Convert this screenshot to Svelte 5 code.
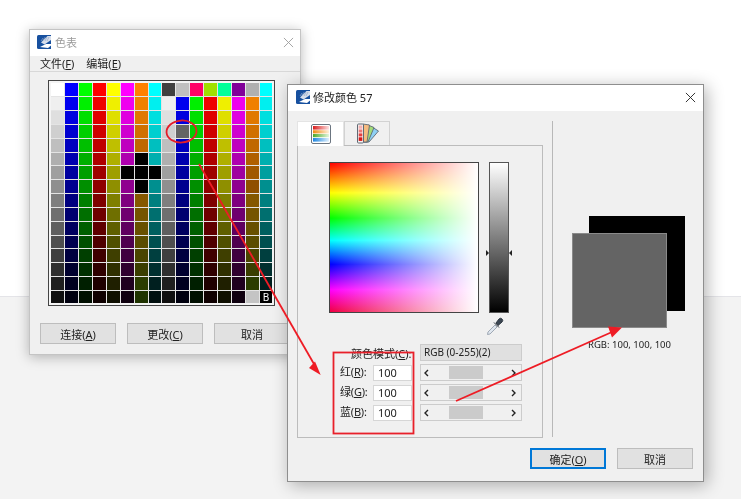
<script>
  const hexv = (n) => Math.max(0, Math.round(n)).toString(16).padStart(2, '0');
  const scale = (base, r) => {
    const v = (255 - 16 * r) / 255;
    return '#' + base.map((c) => hexv(c * v)).join('');
  };
  const orange = ['#ff8000','#f08000','#e07800','#d07000','#c06800','#b06000','#a05800','#905000','#855800','#755400','#685000','#5a4c00','#4a4500','#3a3e00','#2b3c00','#1f3300'];
  const gray = [255,255,255], blue=[0,0,255], green=[0,255,0], red=[255,0,0], yellow=[255,255,0], magenta=[255,0,255], cyan=[0,255,255];
  const top = ['#ffffff','#0000ff','#00ff00','#ff0000','#ffff00','#ff00ff','#ff8000','#00ffff','#404040','#c0c0c0','#ff0066','#a0e000','#00ff99','#800099','#b0b0b0','#00ffff'];
  const columns = [gray,blue,green,red,yellow,magenta,'o',cyan,gray,blue,green,red,yellow,magenta,'o',cyan];
  const black = new Set(['5-6','6-5','6-6','6-7','7-6']);
  const cells = [];
  for (let r = 0; r < 16; r++) for (let c = 0; c < 16; c++) {
    let col;
    if (r === 0) col = top[c];
    else if (columns[c] === 'o') col = orange[r];
    else col = scale(columns[c], r);
    if (black.has(r + '-' + c)) col = '#000000';
    if (r === 3 && c === 9) col = '#646464';
    if (r === 15 && c === 14) col = '#c4c4c4';
    if (r === 15 && c === 15) col = '#000000';
    cells.push({ id: r + '-' + c, col, b: r === 15 && c === 15 });
  }
  const rows = [
    { zh: '红', k: 'R' },
    { zh: '绿', k: 'G' },
    { zh: '蓝', k: 'B' },
  ];
</script>

{#snippet logo()}
  <svg class="logo" viewBox="0 0 16 16" aria-hidden="true">
    <path d="M1 2.5 Q1 1 2.5 1 H15 V15 H2.5 Q1 15 1 13.5 Z" fill="#17509f"/>
    <path d="M5 8.5 L11.5 2 H15 V6 L8.5 10.5 Z" fill="#d7deea"/>
    <path d="M7 4 L5 7 M9 3.2 L7 6.5 M11 3 L9 7 M13 3 L11 7" stroke="#8fa5c8" stroke-width=".7" fill="none"/>
    <path d="M4 13 L10 10 H15 V11.5 L12 14 Z" fill="#ffffff"/>
  </svg>
{/snippet}

{#snippet close()}
  <svg class="close" viewBox="0 0 12 12" aria-hidden="true">
    <path d="M1 1 L11 11 M11 1 L1 11" fill="none" stroke="currentColor" stroke-width="1"/>
  </svg>
{/snippet}

<div class="desk">
  <div class="floor"></div>

  <section class="win palette">
    <header class="title">
      {@render logo()}
      <span class="muted">色表</span>
      {@render close()}
    </header>
    <nav class="menu">
      <span>文件(<u>F</u>)</span>
      <span>编辑(<u>E</u>)</span>
    </nav>
    <div class="grid-frame">
      <div class="grid">
        {#each cells as c (c.id)}
          <div class="cell" style:background={c.col}>{#if c.b}B{/if}</div>
        {/each}
      </div>
    </div>
    <div class="left-btns">
      <button class="btn">连接(<u>A</u>)</button>
      <button class="btn">更改(<u>C</u>)</button>
      <button class="btn">取消</button>
    </div>
  </section>

  <section class="win dialog">
    <header class="title dlg-title">
      {@render logo()}
      <span>修改颜色 57</span>
      {@render close()}
    </header>
    <div class="dlg-body">
      <div class="left-col">
        <div class="tabs">
          <div class="tab active">
            <svg width="20" height="20" viewBox="0 0 20 20" aria-hidden="true">
              <defs>
                <linearGradient id="g1"><stop offset="0" stop-color="#d81e1e"/><stop offset="1" stop-color="#fde0e0"/></linearGradient>
                <linearGradient id="g2"><stop offset="0" stop-color="#f08a10"/><stop offset="1" stop-color="#fdf0d8"/></linearGradient>
                <linearGradient id="g3"><stop offset="0" stop-color="#4aa82a"/><stop offset="1" stop-color="#e4f6dc"/></linearGradient>
                <linearGradient id="g4"><stop offset="0" stop-color="#1a84e0"/><stop offset="1" stop-color="#dff0fd"/></linearGradient>
              </defs>
              <rect x=".5" y=".5" width="19" height="19" rx="1.5" fill="#fff" stroke="#6b7580"/>
              <rect x="2" y="2" width="16" height="3.6" fill="url(#g1)"/>
              <rect x="2" y="6.2" width="16" height="3.2" fill="url(#g2)"/>
              <rect x="2" y="10" width="16" height="3.2" fill="url(#g3)"/>
              <rect x="2" y="14" width="16" height="3.6" fill="url(#g4)"/>
            </svg>
          </div>
          <div class="tab">
            <svg width="23" height="21" viewBox="0 0 23 21" aria-hidden="true">
              <path d="M8 19 L16 4 L22.5 8 L13 19 Z" fill="#8fd0f4" stroke="#5f6a74" stroke-width=".9"/>
              <path d="M7 19 L12 2 L18 4.5 L12 19 Z" fill="#a4dc78" stroke="#5f6a74" stroke-width=".9"/>
              <path d="M6 19 L7 1 L13.5 2 L11 19 Z" fill="#f6bb80" stroke="#5f6a74" stroke-width=".9"/>
              <rect x="1.5" y="1" width="6" height="19" rx="1" fill="#f4f0f0" stroke="#5f6a74" stroke-width="1"/>
              <rect x="2.7" y="2.5" width="3.6" height="3.2" fill="#f6b0b0"/>
              <rect x="2.7" y="6.5" width="3.6" height="3" fill="#ee7878"/>
              <rect x="2.7" y="10.4" width="3.6" height="3" fill="#e64040"/>
              <rect x="2.7" y="14.3" width="3.6" height="3.6" fill="#d81818"/>
            </svg>
          </div>
        </div>
        <div class="pane">
          <div class="pickers">
            <div class="spectrum"></div>
            <div class="lum-wrap">
              <div class="lum"></div>
              <i class="tick tl"></i>
              <i class="tick tr"></i>
            </div>
          </div>
          <div class="dropper-row">
            <svg width="18" height="20" viewBox="0 0 18 20" aria-hidden="true">
              <path d="M1.5 18.5 L2 16 L9 9 L11 11 L4 18 Z" fill="#dfe6ee" stroke="#8d98a6" stroke-width=".8"/>
              <path d="M8 6.5 L13 11.5 M10 7 L13 3 Q14.5 1.5 16 3 Q17.5 4.5 16 6 L12 9.5 Z" fill="#3b4652" stroke="#2d3640"/>
            </svg>
          </div>
          <div class="mode-row">
            <span class="mode-label">颜色模式(<u>C</u>):</span>
            <div class="combo">RGB (0-255)(2)</div>
          </div>
          {#each rows as r (r.k)}
            <div class="rgb-row">
              <label class="rgb-label" for={'v' + r.k}>{r.zh}(<u>{r.k}</u>):</label>
              <input id={'v' + r.k} class="val" value="100" readonly />
              <div class="sb">
                <svg class="chev" viewBox="0 0 6 8" aria-hidden="true"><path d="M5 1 L2 4 L5 7" fill="none" stroke="#222" stroke-width="1.4"/></svg>
                <div class="thumb"></div>
                <svg class="chev" viewBox="0 0 6 8" aria-hidden="true"><path d="M1 1 L4 4 L1 7" fill="none" stroke="#222" stroke-width="1.4"/></svg>
              </div>
            </div>
          {/each}
        </div>
      </div>
      <div class="vline"></div>
      <div class="preview">
        <div class="swatches">
          <div class="sw-back"></div>
          <div class="sw-front"></div>
        </div>
        <p class="rgb-text">RGB: 100, 100, 100</p>
      </div>
    </div>
    <footer class="foot">
      <button class="btn primary">确定(<u>O</u>)</button>
      <button class="btn">取消</button>
    </footer>
  </section>

  <svg class="marks" width="741" height="499" viewBox="0 0 741 499" aria-hidden="true">
    <ellipse cx="181.5" cy="131.5" rx="15" ry="11" fill="none" stroke="#e51c28" stroke-width="1.8" transform="rotate(-4 181.5 131.5)"/>
    <rect x="333.5" y="352.5" width="80" height="81" fill="none" stroke="#e8202a" stroke-width="1.8"/>
    <path d="M199 164 L314 364" stroke="#ee1c25" stroke-width="1.8" fill="none"/>
    <path d="M320.7 375 L315 361.5 L309 368 Z" fill="#ee1c25"/>
    <path d="M456 401 L612 332" stroke="#ee1c25" stroke-width="1.8" fill="none"/>
    <path d="M622 327.5 L608 326.5 L612 337.5 Z" fill="#ee1c25"/>
  </svg>
</div>

<style>
  :global(body) {
    margin: 0;
    background: #fff;
  }
  .desk {
    position: relative;
    width: 741px;
    height: 499px;
    overflow: hidden;
    background: #fff;
    font-family: "Noto Sans", "Noto Sans CJK SC", sans-serif;
    font-size: 11px;
    color: #222;
    filter: blur(0.3px);
  }
  .floor {
    position: absolute;
    left: 0;
    right: 0;
    top: 296px;
    bottom: 0;
    background: #f3f3f3;
    border-top: 1px solid #e4e4e8;
  }
  .win {
    position: absolute;
    box-sizing: border-box;
    background: #f0f0f0;
    border: 1px solid #8e8e8e;
    display: flex;
    flex-direction: column;
  }
  .palette {
    left: 29px;
    top: 29px;
    width: 272px;
    height: 326px;
    border-color: #c4c4c4;
    box-shadow: 0 2px 12px rgba(0, 0, 0, 0.28);
  }
  .dialog {
    left: 287px;
    top: 84px;
    width: 417px;
    height: 398px;
    box-shadow: 3px 3px 16px rgba(0, 0, 0, 0.3);
  }
  .title {
    height: 26px;
    box-sizing: border-box;
    flex: none;
    display: flex;
    align-items: center;
    gap: 3px;
    padding: 0 6px 2px 6px;
    background: #fff;
    font-size: 11px;
  }
  .muted { color: #9a9a9a; }
  .logo { width: 16px; height: 16px; flex: none; }
  .close {
    width: 11px;
    height: 11px;
    margin-left: auto;
    color: #222;
  }
  .palette .close {
    color: #9e9e9e;
  }
  .menu {
    height: 16px;
    box-sizing: border-box;
    flex: none;
    display: flex;
    align-items: center;
    gap: 12px;
    padding: 0 10px 1px;
    border-bottom: 1px solid #d8d8d8;
  }
  .grid-frame {
    box-sizing: border-box;
    width: 227px;
    height: 226px;
    margin: 8px 0 0 18px;
    padding: 2px;
    background: #f4f4f4;
    border: 1px solid #444;
    flex: none;
  }
  .grid {
    display: grid;
    grid-template-columns: repeat(7, 13px) 12px repeat(7, 13px) 12px;
    grid-template-rows: repeat(5, 13px) 12px repeat(5, 13px) 12px repeat(3, 13px) 12px;
    gap: 1px;
    height: 100%;
    background: #e4e4e4;
  }
  .cell {
    display: flex;
    align-items: center;
    justify-content: center;
    color: #fff;
    font-size: 10px;
    line-height: 1;
    overflow: hidden;
  }
  .left-btns {
    display: flex;
    gap: 11px;
    margin: 17px 0 0 10px;
    width: 300px;
  }
  .btn {
    box-sizing: border-box;
    flex: none;
    width: 76px;
    height: 21px;
    padding: 0;
    background: #e1e1e1;
    border: 1px solid #bdbdbd;
    font: inherit;
    color: #222;
  }
  .primary {
    border: 2px solid #0078d7;
  }
  .dlg-title { padding: 0 7px 2px 7px; gap: 2px; }
  .dlg-body {
    flex: 1;
    display: flex;
    min-height: 0;
    padding: 10px 0 0 9px;
  }
  .left-col {
    width: 246px;
    flex: none;
    display: flex;
    flex-direction: column;
  }
  .tabs {
    display: flex;
    height: 24px;
    flex: none;
    position: relative;
    z-index: 1;
  }
  .tab {
    box-sizing: border-box;
    width: 46px;
    height: 24px;
    border: 1px solid #d2d2d2;
    border-bottom: 0;
    display: flex;
    align-items: center;
    justify-content: center;
  }
  .tab.active {
    width: 47px;
    height: 25px;
    background: #fff;
    border-color: #e4e4e4;
  }
  .pane {
    box-sizing: border-box;
    height: 293px;
    border: 1px solid #bcbcbc;
    padding: 16px 0 0 31px;
  }
  .pickers {
    display: flex;
    gap: 10px;
  }
  .spectrum {
    box-sizing: border-box;
    width: 150px;
    height: 151px;
    border: 1px solid #444;
    background:
      linear-gradient(to right, rgba(255, 255, 255, 0), #fff),
      linear-gradient(to bottom, #f00, #ff0 20%, #0f0 37%, #0ff 52%, #00f 68%, #f0f 85%, #f00040);
  }
  .lum-wrap { position: relative; }
  .lum {
    box-sizing: border-box;
    width: 20px;
    height: 151px;
    border: 1px solid #555;
    background: linear-gradient(to bottom, #fff, #000);
  }
  .tick {
    position: absolute;
    top: 88px;
    width: 0;
    height: 0;
    border-top: 3px solid transparent;
    border-bottom: 3px solid transparent;
  }
  .tl { left: -3px; border-left: 3px solid #222; }
  .tr { right: -3px; border-right: 3px solid #222; }
  .dropper-row {
    height: 31px;
    padding: 3px 0 0 157px;
    box-sizing: border-box;
  }
  .mode-row {
    display: flex;
    align-items: center;
    height: 17px;
    margin-bottom: 3px;
  }
  .rgb-row {
    display: flex;
    align-items: flex-start;
    height: 20px;
  }
  .mode-label {
    width: 91px;
    box-sizing: border-box;
    padding-left: 22px;
    white-space: nowrap;
    flex: none;
  }
  .combo {
    box-sizing: border-box;
    width: 102px;
    height: 17px;
    line-height: 15px;
    padding-left: 3px;
    background: #e0e0e0;
    border: 1px solid #ccc;
    font-size: 10px;
  }
  .rgb-label {
    width: 44px;
    padding-left: 11px;
    box-sizing: border-box;
    flex: none;
    white-space: nowrap;
    letter-spacing: -0.2px;
    line-height: 16px;
  }
  .val {
    box-sizing: border-box;
    width: 39px;
    height: 16px;
    margin-top: 1px;
    padding: 0 0 1px 4px;
    border: 1px solid #d6d6d6;
    background: #fff;
    font: inherit;
    color: #222;
    outline: none;
  }
  .sb {
    box-sizing: border-box;
    width: 102px;
    height: 17px;
    margin-left: 8px;
    border: 1px solid #ccc;
    display: flex;
    align-items: center;
    padding: 0 4px 0 2px;
  }
  .chev { width: 6px; height: 8px; flex: none; }
  .thumb {
    width: 34px;
    height: 13px;
    background: #cbcbcb;
    margin-left: 20px;
    margin-right: auto;
  }
  .vline {
    width: 1px;
    height: 316px;
    background: #b8b8b8;
    margin-left: 9px;
    flex: none;
  }
  .preview {
    flex: 1;
    position: relative;
  }
  .swatches {
    position: relative;
    margin: 95px 0 0 19px;
    width: 113px;
    height: 112px;
  }
  .sw-back {
    position: absolute;
    right: 0;
    top: 0;
    width: 96px;
    height: 95px;
    background: #000;
  }
  .sw-front {
    position: absolute;
    left: 0;
    bottom: 0;
    width: 95px;
    height: 95px;
    box-sizing: border-box;
    background: #646464;
    border: 1px solid #8a8a8a;
  }
  .rgb-text {
    margin: 10px 0 0 35px;
    font-size: 9.5px;
    white-space: nowrap;
  }
  .foot {
    flex: none;
    display: flex;
    justify-content: flex-end;
    gap: 11px;
    padding: 0 10px 10px 0;
    height: 33px;
    box-sizing: border-box;
  }
  .marks {
    position: absolute;
    left: 0;
    top: 0;
    pointer-events: none;
  }
</style>
